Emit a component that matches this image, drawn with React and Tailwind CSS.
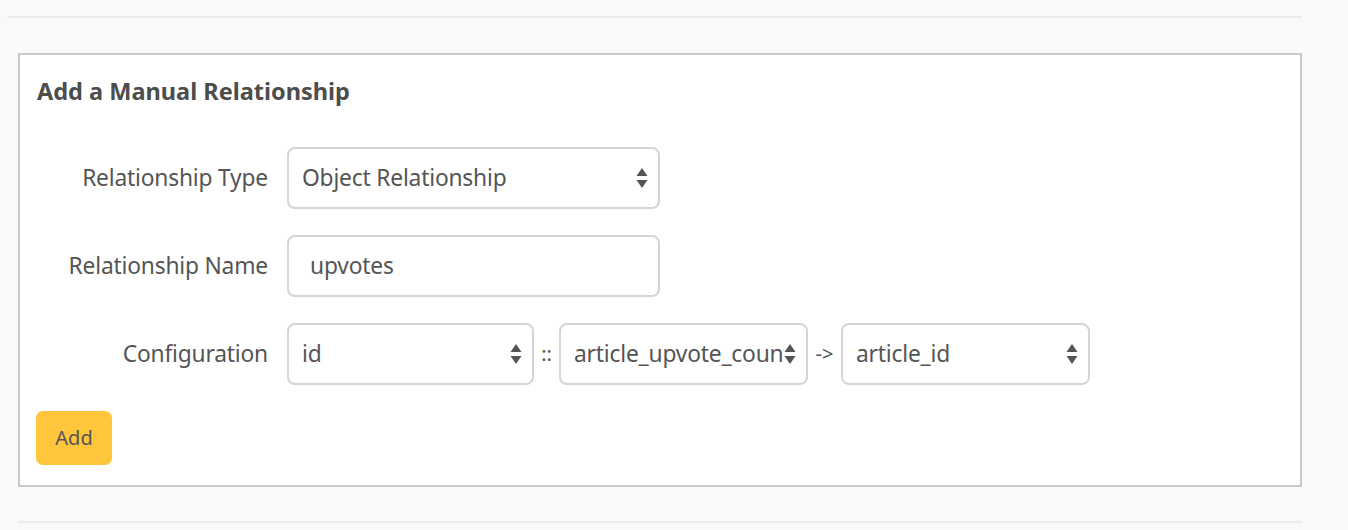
import React from 'react';

const font = { fontFamily: '"Noto Sans", "Open Sans", sans-serif' };

const Arrows = () => (
    <svg width="12" height="22" viewBox="0 0 12 22" className="shrink-0">
        <path d="M6 1 L11.5 9 L0.5 9 Z" fill="#555" />
        <path d="M6 21 L11.5 13 L0.5 13 Z" fill="#555" />
    </svg>
);

const Select = ({ value, width }) => (
    <div className={`${width} h-[62px] flex items-center justify-between pl-[13px] pr-[10px] bg-white border-2 border-[#d5d5d5] rounded-[8px] overflow-hidden`}>
        <span className="whitespace-nowrap overflow-hidden text-[#555] text-[22.8px] tracking-[-0.2px]">{value}</span>
        <Arrows />
    </div>
);

const Row = ({ label, children }) => (
    <div className="flex items-center">
        <div className="w-[231px] text-right text-[#555] text-[22.8px] tracking-[-0.2px] pr-[19px] box-content">{label}</div>
        {children}
    </div>
);

export default function App() {
    return (
        <div className="w-[1348px] h-[530px] bg-[#f8f9fb] overflow-hidden pt-[16px]" style={font}>
            <div className="ml-[7px] w-[1295px] h-[2px] bg-[#ececec]" />
            <div className="ml-[18px] mt-[35px] w-[1284px] h-[434px] bg-white border-2 border-[#cacaca] pl-[17px] pt-[19px]">
                <h2 className="text-[23.5px] font-bold text-[#4d4d4d]">Add a Manual Relationship</h2>
                <div className="flex flex-col gap-[26px] mt-[38px]">
                    <Row label="Relationship Type">
                        <Select value="Object Relationship" width="w-[373px]" />
                    </Row>
                    <Row label="Relationship Name">
                        <div className="w-[373px] h-[62px] flex items-center pl-[21px] bg-white border-2 border-[#d5d5d5] rounded-[8px] text-[#555] text-[22.8px] tracking-[-0.2px]">upvotes</div>
                    </Row>
                    <Row label="Configuration">
                        <div className="flex items-center">
                            <Select value="id" width="w-[247px]" />
                            <span className="w-[25px] text-center text-[#555] text-[20px]">::</span>
                            <Select value="article_upvote_count" width="w-[249px]" />
                            <span className="w-[33px] text-center text-[#555] text-[20px]">-&gt;</span>
                            <Select value="article_id" width="w-[249px]" />
                        </div>
                    </Row>
                </div>
                <button className="mt-[26px] -ml-[1px] w-[76px] h-[54px] bg-[#ffc53d] rounded-[7px] text-[#555] text-[20px]">Add</button>
            </div>
            <div className="ml-[18px] mt-[34px] w-[1284px] h-[2px] bg-[#ececec]" />
        </div>
    );
}
